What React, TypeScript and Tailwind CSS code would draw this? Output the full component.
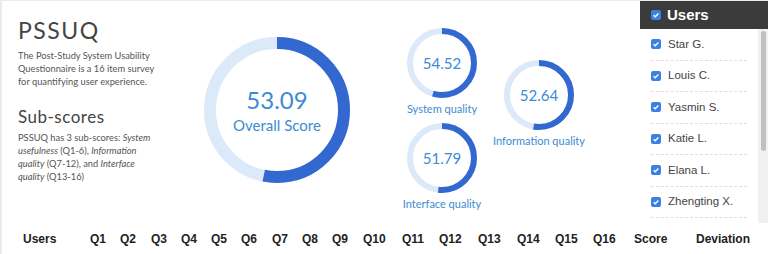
const USERS = ["Star G.", "Louis C.", "Yasmin S.", "Katie L.", "Elana L.", "Zhengting X."];

const COLUMNS: { label: string; w: string }[] = [
  { label: "Users", w: "w-[67px]" },
  { label: "Q1", w: "w-[30px]" },
  { label: "Q2", w: "w-[31px]" },
  { label: "Q3", w: "w-[30px]" },
  { label: "Q4", w: "w-[30px]" },
  { label: "Q5", w: "w-[30px]" },
  { label: "Q6", w: "w-[31px]" },
  { label: "Q7", w: "w-[30px]" },
  { label: "Q8", w: "w-[30px]" },
  { label: "Q9", w: "w-[31px]" },
  { label: "Q10", w: "w-[39px]" },
  { label: "Q11", w: "w-[37px]" },
  { label: "Q12", w: "w-[39px]" },
  { label: "Q13", w: "w-[39px]" },
  { label: "Q14", w: "w-[38px]" },
  { label: "Q15", w: "w-[38px]" },
  { label: "Q16", w: "w-[41px]" },
  { label: "Score", w: "w-[62px]" },
  { label: "Deviation", w: "flex-1" },
];

function Ring({ size, stroke, value }: { size: number; stroke: number; value: number }) {
  const r = (size - stroke) / 2;
  const c = 2 * Math.PI * r;
  return (
    <svg width={size} height={size} viewBox={`0 0 ${size} ${size}`} className="block">
      <circle cx={size / 2} cy={size / 2} r={r} fill="none" stroke="#dce9f9" strokeWidth={stroke} />
      <circle
        cx={size / 2}
        cy={size / 2}
        r={r}
        fill="none"
        stroke="#3468d1"
        strokeWidth={stroke}
        strokeDasharray={`${(c * value) / 100} ${c}`}
        transform={`rotate(-90 ${size / 2} ${size / 2})`}
      />
    </svg>
  );
}

function SmallGauge({ value, label }: { value: number; label: string }) {
  return (
    <div className="flex flex-col items-center">
      <div className="relative">
        <Ring size={70} stroke={6} value={value} />
        <div className="absolute inset-0 flex items-center justify-center text-[15px] text-[#3d8bd1]">
          {value.toFixed(2)}
        </div>
      </div>
      <div className="mt-[4px] text-[11px] leading-[14px] text-[#3d8bd1] whitespace-nowrap">{label}</div>
    </div>
  );
}

function Check() {
  return (
    <span className="flex-none w-[10px] h-[10px] rounded-[2px] bg-[#3b80e4] flex items-center justify-center">
      <svg width="8" height="8" viewBox="0 0 8 8">
        <path d="M1.6 4.2 L3.2 5.7 L6.4 2.4" fill="none" stroke="white" strokeWidth="1.4" />
      </svg>
    </span>
  );
}

export default function App() {
  return (
    <div className="w-[768px] h-[254px] overflow-hidden bg-white border-l-2 border-t border-[#ebebeb] font-['Lato',sans-serif]">
      <div className="flex items-start h-[222px]">
        <div className="ml-[16px] w-[160px] text-[#555]">
          <h1 className="mt-[18px] text-[23px] leading-none tracking-[1.5px] text-[#444]">PSSUQ</h1>
          <p className="mt-[7px] text-[9.3px] leading-[13px] whitespace-nowrap">
            The Post-Study System Usability
            <br />
            Questionnaire is a 16 item survey
            <br />
            for quantifying user experience.
          </p>
          <h2 className="mt-[20px] text-[17px] leading-none tracking-[0.5px] text-[#444]">Sub-scores</h2>
          <p className="mt-[6px] text-[9.3px] leading-[13px] whitespace-nowrap">
            PSSUQ has 3 sub-scores: <i>System</i>
            <br />
            <i>usefulness</i> (Q1-6), <i>Information</i>
            <br />
            <i>quality</i> (Q7-12), and <i>Interface</i>
            <br />
            <i>quality</i> (Q13-16)
          </p>
        </div>

        <div className="relative ml-[26px] mt-[36px]">
          <Ring size={146} stroke={12} value={53.09} />
          <div className="absolute inset-0 flex flex-col items-center justify-center text-[#3d8bd1]">
            <div className="text-[24px] leading-none">53.09</div>
            <div className="mt-[6px] text-[15px] leading-none">Overall Score</div>
          </div>
        </div>

        <div className="ml-[52px] mt-[27px] w-[80px] flex flex-col items-center gap-[7px]">
          <SmallGauge value={54.52} label="System quality" />
          <SmallGauge value={51.79} label="Interface quality" />
        </div>

        <div className="ml-[10px] mt-[59px] w-[94px] flex flex-col items-center">
          <SmallGauge value={52.64} label="Information quality" />
        </div>

        <div className="ml-auto w-[128px] h-[222px] flex flex-col font-['Liberation_Sans',Arial,sans-serif]">
          <div className="h-[28px] flex-none bg-[#3b3b3b] flex items-center pl-[11px] gap-[6px]">
            <Check />
            <span className="text-[15px] font-bold text-white">Users</span>
          </div>
          <div className="flex flex-1 min-h-0">
            <ul className="flex-1 overflow-hidden px-[11px]">
              {USERS.map((u) => (
                <li
                  key={u}
                  className="h-[31.5px] flex items-center gap-[7px] border-b border-dashed border-[#dedede] text-[11.5px] text-[#444]"
                >
                  <Check />
                  {u}
                </li>
              ))}
            </ul>
            <div className="w-[10px] flex-none bg-[#f1f1f1] pt-[2px] pl-[3px]">
              <div className="w-[5px] h-[120px] rounded-full bg-[#c0c0c0]" />
            </div>
          </div>
        </div>
      </div>

      <div className="flex items-center h-[31px] pl-[21px] pr-[10px] font-['Liberation_Sans',Arial,sans-serif] text-[12px] leading-[14px] font-bold text-[#222]">
        {COLUMNS.map((c) => (
          <div key={c.label} className={`${c.w} flex-none whitespace-nowrap`}>
            {c.label}
          </div>
        ))}
      </div>
    </div>
  );
}
